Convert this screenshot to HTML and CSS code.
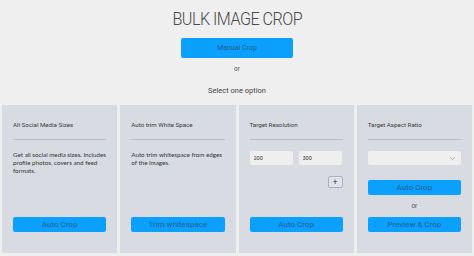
FILE: index.html
```html
<!DOCTYPE html>
<html lang="en">
<head>
  <meta charset="UTF-8">
  <title>Bulk Image Crop</title>
  <link rel="stylesheet" href="styles.css">
</head>
<body>
  <div class="page">
    <div class="top">
      <h1 class="title">BULK IMAGE CROP</h1>
      <button class="btn manual-btn">Manual Crop</button>
      <div class="or">or</div>
      <div class="select-text">Select one option</div>
    </div>

    <div class="options">
      <div class="card">
        <div class="card-title">All Social Media Sizes</div>
        <div class="divider"></div>
        <p class="desc">Get all social media sizes. Includes profile photos, covers and feed formats.</p>
        <button class="btn card-btn">Auto Crop</button>
      </div>

      <div class="card">
        <div class="card-title">Auto trim White Space</div>
        <div class="divider"></div>
        <p class="desc">Auto trim whitespace from edges of the images.</p>
        <button class="btn card-btn">Trim whitespace</button>
      </div>

      <div class="card">
        <div class="card-title">Target Resolution</div>
        <div class="divider"></div>
        <div class="res-row">
          <input class="field" type="text" value="200">
          <input class="field" type="text" value="300">
        </div>
        <div class="add-row">
          <button class="add-btn">+</button>
        </div>
        <button class="btn card-btn">Auto Crop</button>
      </div>

      <div class="card">
        <div class="card-title">Target Aspect Ratio</div>
        <div class="divider"></div>
        <div class="select-box">
          <svg width="7" height="5" viewBox="0 0 7 5"><path d="M1 1.2 L3.5 3.6 L6 1.2" fill="none" stroke="#a7a9ad" stroke-width="0.9"/></svg>
        </div>
        <button class="btn ratio-btn">Auto Crop</button>
        <div class="small-or">or</div>
        <button class="btn card-btn">Preview &amp; Crop</button>
      </div>
    </div>
  </div>
</body>
</html>
```

FILE: styles.css
```css
* { box-sizing: border-box; margin: 0; padding: 0; }
body {
  font-family: Roboto, "Noto Sans", sans-serif;
  background: #efefef;
  color: #444;
}
.page {
  width: 474px;
  height: 256px;
  overflow: hidden;
}
/* header area */
.top {
  display: flex;
  flex-direction: column;
  align-items: center;
  padding-top: 7px;
}
.title {
  font-size: 19px;
  font-weight: 300;
  line-height: 24px;
  color: #4a4a4a;
  letter-spacing: -0.6px;
  transform: scaleX(0.85);
}
.btn {
  border: none;
  border-radius: 2px;
  background: #0ba0fc;
  color: #245d90;
  font-family: inherit;
  cursor: pointer;
}
.manual-btn {
  margin-top: 7px;
  width: 112px;
  height: 20px;
  font-size: 7px;
}
.or {
  margin-top: 7px;
  font-size: 6.5px;
  color: #555;
  line-height: 8px;
}
.select-text {
  margin-top: 13px;
  font-size: 7.5px;
  color: #444;
  line-height: 10px;
}
/* option cards */
.options {
  display: grid;
  grid-template-columns: repeat(4, 1fr);
  gap: 3px;
  padding: 0 2px;
  margin-top: 9px;
}
.card {
  background: #d8dce2;
  height: 148px;
  padding: 16px 11px 21px 11px;
  display: flex;
  flex-direction: column;
}
.card-title {
  font-size: 6.2px;
  line-height: 8px;
  color: #3a3a3a;
}
.divider {
  height: 1px;
  background: #b9bdc5;
  margin-top: 10px;
}
.desc {
  margin-top: 11px;
  font-family: Lato, Roboto, sans-serif;
  font-size: 6.25px;
  line-height: 8px;
  color: #333;
}
.card-btn {
  margin-top: auto;
  height: 15px;
  font-size: 8px;
  width: 100%;
}
.res-row {
  display: flex;
  gap: 6px;
  margin-top: 11px;
}
.field {
  width: 43px;
  height: 14px;
  border: none;
  border-radius: 2px;
  background: #efefef;
  font-family: inherit;
  font-size: 5.5px;
  color: #333;
  padding-left: 4px;
  outline: none;
}
.add-row {
  display: flex;
  justify-content: flex-end;
  margin-top: 11px;
}
.add-btn {
  width: 15px;
  height: 12px;
  border: 1px solid #acb0b6;
  border-radius: 2px;
  background: #dfe2e7;
  font-size: 9px;
  line-height: 9px;
  color: #333;
}
.select-box {
  margin-top: 11px;
  height: 14px;
  background: #efefef;
  border-radius: 2px;
  display: flex;
  justify-content: flex-end;
  align-items: center;
  padding-right: 5px;
}
.ratio-btn {
  margin-top: 15px;
  height: 15px;
  font-size: 8px;
  width: 100%;
}
.small-or {
  margin-top: 7px;
  text-align: center;
  font-size: 6.5px;
  line-height: 8px;
  color: #555;
}
```
